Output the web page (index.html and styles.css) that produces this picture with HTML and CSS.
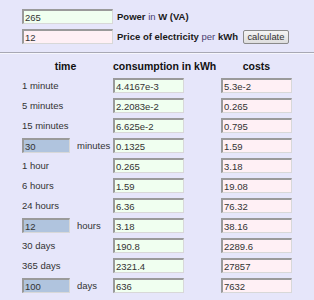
FILE: index.html
```html
<!DOCTYPE html>
<html>
<head>
<meta charset="utf-8">
<link rel="stylesheet" href="styles.css">
</head>
<body>
<div class="top">
  <div class="line">
    <input class="inp big green" value="265">
    <span class="lbl"><b>Power</b> <span class="soft">in</span> <b>W (VA)</b></span>
  </div>
  <div class="line">
    <input class="inp big pink" value="12">
    <span class="lbl"><b>Price of electricity</b> <span class="soft">per</span> <b>kWh</b></span>
    <button class="btn">calculate</button>
  </div>
</div>
<div class="rule"></div>
<div class="grid">
  <div class="th th-time">time</div>
  <div class="th th-cons">consumption in kWh</div>
  <div class="th th-cost">costs</div>

  <div class="c1">1 minute</div>
  <input class="inp green" value="4.4167e-3">
  <input class="inp pink" value="5.3e-2">

  <div class="c1">5 minutes</div>
  <input class="inp green" value="2.2083e-2">
  <input class="inp pink" value="0.265">

  <div class="c1">15 minutes</div>
  <input class="inp green" value="6.625e-2">
  <input class="inp pink" value="0.795">

  <div class="c1 custom"><input class="inp blue" value="30"><span>minutes</span></div>
  <input class="inp green" value="0.1325">
  <input class="inp pink" value="1.59">

  <div class="c1">1 hour</div>
  <input class="inp green" value="0.265">
  <input class="inp pink" value="3.18">

  <div class="c1">6 hours</div>
  <input class="inp green" value="1.59">
  <input class="inp pink" value="19.08">

  <div class="c1">24 hours</div>
  <input class="inp green" value="6.36">
  <input class="inp pink" value="76.32">

  <div class="c1 custom"><input class="inp blue" value="12"><span>hours</span></div>
  <input class="inp green" value="3.18">
  <input class="inp pink" value="38.16">

  <div class="c1">30 days</div>
  <input class="inp green" value="190.8">
  <input class="inp pink" value="2289.6">

  <div class="c1">365 days</div>
  <input class="inp green" value="2321.4">
  <input class="inp pink" value="27857">

  <div class="c1 custom"><input class="inp blue" value="100"><span>days</span></div>
  <input class="inp green" value="636">
  <input class="inp pink" value="7632">
</div>
</body>
</html>
```
FILE: styles.css
```css
html, body {
  margin: 0;
  padding: 0;
  background: #e6e6fa;
}
body {
  font-family: "Liberation Sans", Arial, sans-serif;
  font-size: 9.5px;
  color: #333;
}
.top {
  padding: 9px 0 0 22px;
  display: flex;
  flex-direction: column;
  gap: 5px;
}
.line {
  display: flex;
  align-items: center;
  height: 15px;
}
.inp {
  box-sizing: border-box;
  height: 15px;
  width: 71px;
  margin: 0;
  padding: 0 0 0 1px;
  font-family: "Liberation Sans", Arial, sans-serif;
  font-size: 9.5px;
  color: #333;
  border-style: solid;
  border-width: 2px 1px 1px 2px;
  border-color: #9a9a9a #d8d8d8 #d8d8d8 #9a9a9a;
  outline: none;
}
.big {
  width: 91px;
}
.green { background: #f0fff0; }
.pink { background: #fff0f5; }
.blue { background: #b0c4de; width: 48px; }
.lbl {
  margin-left: 4px;
  font-size: 9.5px;
  color: #222;
}
.lbl b { color: #1a1a1a; }
.soft { color: #4a4070; }
.btn {
  box-sizing: border-box;
  margin-left: 5px;
  height: 14px;
  width: 46px;
  padding: 0;
  font-family: "Liberation Sans", Arial, sans-serif;
  font-size: 9.4px;
  color: #333;
  background: linear-gradient(#f4f4f4, #dedede);
  border: 1px solid #8a8a8a;
  border-radius: 2px;
}
.rule {
  margin-top: 8px;
  border-top: 1px solid #a8a8b4;
  border-bottom: 1px solid #f6f6fc;
}
.grid {
  margin-top: 6px;
  padding-left: 22px;
  display: grid;
  grid-template-columns: 91px 108px 71px;
  grid-auto-rows: 15px;
  grid-template-rows: 13px;
  row-gap: 5px;
  align-items: center;
}
.th {
  font-weight: bold;
  font-size: 10.5px;
  line-height: 13px;
  color: #111;
  white-space: nowrap;
}
.th-time {
  text-align: center;
  padding-right: 4px;
}
.th-cost {
  text-align: center;
}
.c1 {
  color: #333;
}
.custom {
  display: flex;
  align-items: center;
  gap: 7px;
}
```
